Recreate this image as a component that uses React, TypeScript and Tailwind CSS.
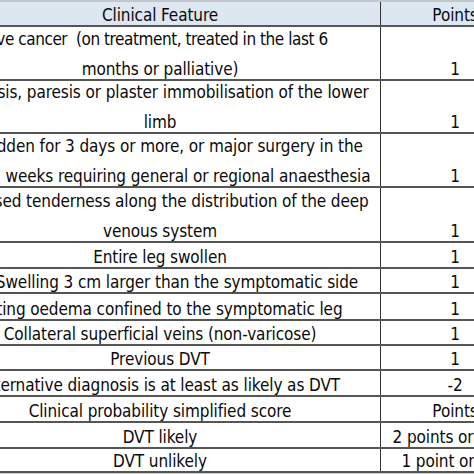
import React from "react";

type Row = {
  feature: string[];
  points: string;
  height: string;
};

const rows: Row[] = [
  {
    feature: ["Active cancer  (on treatment, treated in the last 6", "months or palliative)"],
    points: "1",
    height: "h-[54px]",
  },
  {
    feature: ["Paralysis, paresis or plaster immobilisation of the lower", "limb"],
    points: "1",
    height: "h-[53px]",
  },
  {
    feature: [
      "Bedridden for 3 days or more, or major surgery in the",
      "last 12 weeks requiring general or regional anaesthesia",
    ],
    points: "1",
    height: "h-[54px]",
  },
  {
    feature: ["Localised tenderness along the distribution of the deep", "venous system"],
    points: "1",
    height: "h-[55px]",
  },
  { feature: ["Entire leg swollen"], points: "1", height: "h-[26px]" },
  { feature: ["Calf Swelling 3 cm larger than the symptomatic side"], points: "1", height: "h-[25px]" },
  { feature: ["Pitting oedema confined to the symptomatic leg"], points: "1", height: "h-[27px]" },
  { feature: ["Collateral superficial veins (non-varicose)"], points: "1", height: "h-[25px]" },
  { feature: ["Previous DVT"], points: "1", height: "h-[25px]" },
  { feature: ["Alternative diagnosis is at least as likely as DVT"], points: "-2", height: "h-[26px]" },
  { feature: ["Clinical probability simplified score"], points: "Points", height: "h-[26px]" },
  { feature: ["DVT likely"], points: "2 points or more", height: "h-[26px]" },
  { feature: ["DVT unlikely"], points: "1 point or less", height: "h-[24px]" },
];

export default function App() {
  return (
    <div className="w-[474px] h-[474px] overflow-hidden bg-white text-[#0a0a0a] text-[17px] tracking-[-0.1px] font-['DejaVu_Sans_Condensed','DejaVu_Sans',sans-serif]">
      <div className="ml-[-60px] w-[589px]">
        <div className="h-[2px] bg-[#c4c7cc]" />
        {/* header */}
        <div className="flex h-[25px] bg-[#dde7f2] border-b-2 border-[#555]">
          <div className="w-[441px] border-r border-[#333] flex items-end justify-center leading-5 whitespace-pre">
            Clinical Feature
          </div>
          <div className="w-[148px] flex items-end justify-center leading-5 whitespace-pre">
            Points
          </div>
        </div>

        {rows.map((row, i) => (
          <div key={i} className={`flex border-b-2 border-[#555] ${row.height}`}>
            <div className="w-[441px] border-r border-[#333] flex flex-col items-center justify-end gap-[10px] leading-5 whitespace-pre">
              {row.feature.map((line, j) => (
                <span key={j} className={i === 0 && j === 0 ? "tracking-[-0.45px] pr-[23px]" : ""}>
                  {line}
                </span>
              ))}
            </div>
            <div className="w-[148px] flex items-end justify-center leading-5 whitespace-pre">
              {row.points}
            </div>
          </div>
        ))}
        <div className="h-[4px] bg-[#c8c8c8]" />
      </div>
    </div>
  );
}
